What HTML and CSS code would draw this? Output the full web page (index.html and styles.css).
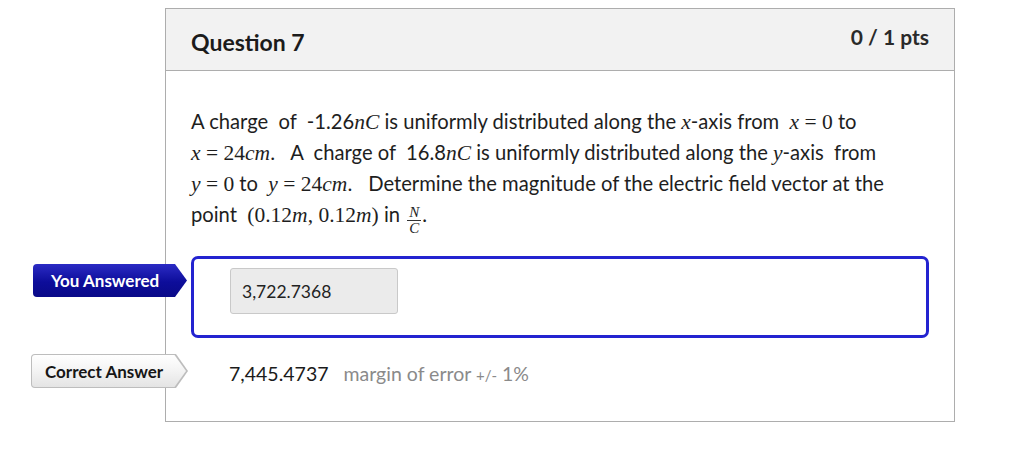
FILE: index.html
```html
<!DOCTYPE html>
<html>
<head>
<meta charset="utf-8">
<link rel="stylesheet" href="styles.css">
</head>
<body>
<div class="card">
  <div class="header">
    <h2 class="title">Question 7</h2>
    <span class="pts">0 / 1 pts</span>
  </div>
  <div class="body">
    <p class="question">
      A charge&nbsp; of&nbsp; -1.26<span class="m"><i>nC</i></span> is uniformly distributed along the <span class="m"><i>x</i></span>-axis from&nbsp; <span class="m"><i>x</i> = 0</span> to<br>
      <span class="m"><i>x</i> = 24<i>cm</i>.</span>&nbsp;&nbsp; A&nbsp; charge of&nbsp; 16.8<span class="m"><i>nC</i></span> is uniformly distributed along the <span class="m"><i>y</i></span>-axis&nbsp; from<br>
      <span class="m"><i>y</i> = 0</span> to&nbsp; <span class="m"><i>y</i> = 24<i>cm</i>.</span>&nbsp;&nbsp; Determine the magnitude of the electric field vector at the<br>
      point&nbsp; <span class="m">(0.12<i>m</i>, 0.12<i>m</i>)</span> in <span class="frac"><span class="num">N</span><span class="den">C</span></span>.
    </p>
    <div class="answer-row you-row">
      <div class="tag-wrap tag-wrap-you"><span class="tag tag-you">You Answered</span></div>
      <div class="answer-box">
        <div class="answer-input">3,722.7368</div>
      </div>
    </div>
    <div class="answer-row correct-row">
      <div class="tag-wrap tag-wrap-correct"><span class="tag-border"><span class="tag tag-correct">Correct Answer</span></span></div>
      <div class="correct-text">
        <span class="correct-value">7,445.4737</span>
        <span class="margin">margin of error <span class="pm">+/-</span> 1%</span>
      </div>
    </div>
  </div>
</div>
</body>
</html>
```

FILE: styles.css
```css
* { box-sizing: border-box; }
html, body { margin: 0; padding: 0; background: #fff; }
body {
  font-family: Lato, "Liberation Sans", sans-serif;
  color: #2d3b45;
}
.card {
  margin: 8px 0 0 165px;
  width: 790px;
  height: 414px;
  border: 1px solid #adadad;
  background: #fff;
}
.header {
  height: 62px;
  background: #f2f2f2;
  border-bottom: 1px solid #adadad;
  display: flex;
  justify-content: space-between;
  align-items: flex-start;
  padding: 0 25px;
}
.title {
  margin: 22px 0 0;
  font-size: 23px;
  font-weight: 700;
  color: #1b1b1b;
  line-height: 1;
}
.pts {
  margin-top: 17px;
  font-size: 21px;
  font-weight: 700;
  color: #2a2a2a;
  line-height: 1;
}
.body {
  padding: 35px 25px 0;
}
.question {
  margin: 0;
  font-size: 20.2px;
  line-height: 30px;
  height: 120px;
  color: #1e1e1e;
  white-space: nowrap;
}
.m {
  font-family: "Liberation Serif", "Times New Roman", serif;
  font-size: 21.5px;
}
.m i { font-style: italic; }
.frac {
  display: inline-flex;
  flex-direction: column;
  align-items: center;
  vertical-align: 5px;
  font-family: "Liberation Serif", serif;
  font-style: italic;
  font-size: 15px;
  line-height: 13px;
  margin: 0 1px 0 2px;
}
.frac .num { border-bottom: 1px solid #333; padding: 0 2px 1px; }
.frac .den { padding-top: 1px; }
.answer-row {
  position: relative;
  display: flex;
}
.you-row { margin-top: 30px; }
.answer-box {
  width: 738px;
  height: 82px;
  border: 3px solid #2323d0;
  border-radius: 7px;
  padding: 9px 36px;
}
.answer-input {
  width: 168px;
  height: 46px;
  background: #ebebeb;
  border: 1px solid #c9c9c9;
  border-radius: 3px;
  padding: 0 11px;
  display: flex;
  align-items: center;
  font-size: 17.5px;
  color: #222;
}
.tag-wrap {
  position: absolute;
  top: 8px;
}
.tag-wrap-you { left: -158px; }
.tag-wrap-correct { left: -160px; top: 0; }
.tag {
  display: flex;
  align-items: center;
  height: 33px;
  padding-left: 18px;
  border-radius: 4px 0 0 4px;
  clip-path: polygon(0 0, calc(100% - 12px) 0, 100% 50%, calc(100% - 12px) 100%, 0 100%);
  font-size: 17px;
  font-weight: 700;
  white-space: nowrap;
}
.tag-you {
  width: 154px;
  color: #fff;
  background: linear-gradient(#2b2bc4, #0d0d9a 55%, #0a0a88);
}
.tag-border {
  display: block;
  width: 157px;
  height: 34px;
  padding: 1px;
  border-radius: 4px 0 0 4px;
  background: #bdbdbd;
  clip-path: polygon(0 0, calc(100% - 12px) 0, 100% 50%, calc(100% - 12px) 100%, 0 100%);
}
.tag-correct {
  width: 154px;
  height: 32px;
  padding-left: 13px;
  border-radius: 3px 0 0 3px;
  clip-path: polygon(0 0, calc(100% - 11.5px) 0, 100% 50%, calc(100% - 11.5px) 100%, 0 100%);
  color: #161616;
  background: linear-gradient(#ffffff, #f3f3f3 50%, #e4e4e4);
}
.correct-row {
  margin-top: 16px;
  height: 36px;
}
.correct-text {
  padding-left: 38px;
  padding-top: 8px;
  display: flex;
  align-items: baseline;
  gap: 15px;
  font-size: 19.5px;
}
.correct-value { color: #1b1b1b; }
.margin { color: #8a8a8a; }
.pm { font-size: 15px; }
```
